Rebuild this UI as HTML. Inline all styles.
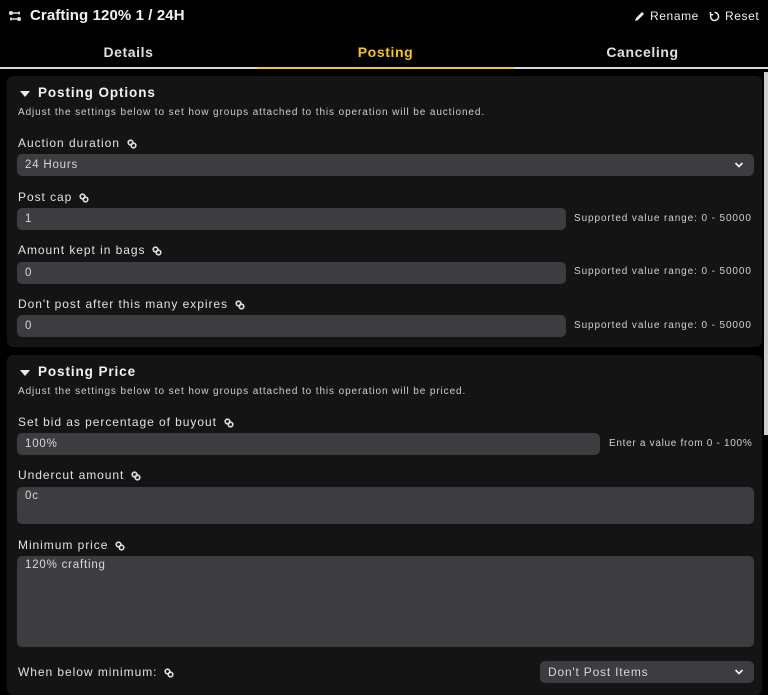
<!DOCTYPE html>
<html><head><meta charset="utf-8"><style>
*{box-sizing:border-box;margin:0;padding:0}
body{width:768px;height:693px;overflow:hidden;background:#000;color:#e6e6e6;font-family:"Liberation Sans","DejaVu Sans",sans-serif;position:relative}
.a{position:absolute;white-space:nowrap}
.title{left:30px;top:7px;font-size:15px;font-weight:bold;color:#f2f2f2;letter-spacing:.1px}
.tab{top:44px;font-size:14px;font-weight:bold;width:257px;text-align:center;letter-spacing:.6px;color:#e0e0e0}
.panel{position:absolute;left:7px;right:6px;background:#141415;border-radius:6px}
.h{font-size:13.5px;font-weight:bold;color:#f2f2f2;letter-spacing:.9px}
.d{font-size:10px;color:#cfcfcf;letter-spacing:.9px}
.l{font-size:12px;color:#e2e2e2;letter-spacing:.95px}
.in{position:absolute;background:#3c3c41;border-radius:5px;font-size:11.5px;color:#d8d8d8;padding-left:8px;letter-spacing:.8px}
.hint{font-size:10px;color:#d0d0d0;letter-spacing:.9px}
.link{display:inline-block;margin-left:7px;vertical-align:middle}
.tri{position:absolute;width:0;height:0;border-left:5px solid transparent;border-right:5px solid transparent;border-top:6px solid #eee}
</style></head><body>
<svg class="a" style="left:9px;top:10px" width="12" height="12" viewBox="0 0 12 12" fill="none" stroke="#ddd" stroke-width="1.5"><path d="M1 3h10M1 9h10"/><circle cx="2" cy="3" r="1.3" fill="#ddd"/><circle cx="10" cy="9" r="1.3" fill="#ddd"/><path d="M10 1.5v3M2 7.5v3"/></svg>
<div class="a title">Crafting 120% 1 / 24H</div>
<svg class="a" style="left:634px;top:11px" width="11" height="11" viewBox="0 0 11 11"><path d="M1 10l1-3 6-6 2 2-6 6z" fill="#eee"/></svg>
<div class="a" style="left:650px;top:9px;font-size:12px;letter-spacing:.6px;color:#eee">Rename</div>
<svg class="a" style="left:709px;top:11px" width="11" height="11" viewBox="0 0 11 11" fill="none" stroke="#eee" stroke-width="1.4"><path d="M2.3 3.2A4 4 0 1 0 5.5 1.5"/><path d="M1.5 1v2.7h2.7" /></svg>
<div class="a" style="left:725px;top:9px;font-size:12px;letter-spacing:.6px;color:#eee">Reset</div>
<div class="a tab" style="left:0;">Details</div>
<div class="a tab" style="left:257px;color:#f5c518">Posting</div>
<div class="a tab" style="left:514px;">Canceling</div>
<div class="a" style="left:0;top:67px;width:768px;height:2px;background:#d8d8d8"></div>
<div class="a" style="left:257px;top:67px;width:257px;height:2px;background:#f5c518"></div>
<div class="a" style="left:764px;top:72px;width:4px;height:363px;background:#cfcfcf"></div>

<div class="panel" style="top:76px;height:271px"></div>
<div class="panel" style="top:355px;height:340px"></div>

<div class="tri" style="left:20px;top:91px"></div>
<div class="a h" style="left:38px;top:85px">Posting Options</div>
<div class="a d" style="left:18px;top:107px">Adjust the settings below to set how groups attached to this operation will be auctioned.</div>

<div class="a l" style="left:18px;top:136px">Auction duration<svg class="link" width="10" height="10" viewBox="0 0 10 10" fill="none" stroke="#ddd" stroke-width="1.6"><circle cx="3.5" cy="3.5" r="2.3"/><circle cx="6.5" cy="6.5" r="2.3"/></svg></div>
<div class="in" style="left:17px;top:154px;width:737px;height:22px;line-height:22px">24 Hours</div>
<svg class="a" style="left:734px;top:161px" width="10" height="8" viewBox="0 0 10 8"><path d="M1.5 2l3.5 3.5L8.5 2" fill="none" stroke="#eee" stroke-width="1.8"/></svg>

<div class="a l" style="left:18px;top:190px">Post cap<svg class="link" width="10" height="10" viewBox="0 0 10 10" fill="none" stroke="#ddd" stroke-width="1.6"><circle cx="3.5" cy="3.5" r="2.3"/><circle cx="6.5" cy="6.5" r="2.3"/></svg></div>
<div class="in" style="left:17px;top:208px;width:549px;height:22px;line-height:22px">1</div>
<div class="a hint" style="left:574px;top:213px">Supported value range: 0 - 50000</div>

<div class="a l" style="left:18px;top:243px">Amount kept in bags<svg class="link" width="10" height="10" viewBox="0 0 10 10" fill="none" stroke="#ddd" stroke-width="1.6"><circle cx="3.5" cy="3.5" r="2.3"/><circle cx="6.5" cy="6.5" r="2.3"/></svg></div>
<div class="in" style="left:17px;top:262px;width:549px;height:22px;line-height:22px">0</div>
<div class="a hint" style="left:574px;top:266px">Supported value range: 0 - 50000</div>

<div class="a l" style="left:18px;top:297px">Don't post after this many expires<svg class="link" width="10" height="10" viewBox="0 0 10 10" fill="none" stroke="#ddd" stroke-width="1.6"><circle cx="3.5" cy="3.5" r="2.3"/><circle cx="6.5" cy="6.5" r="2.3"/></svg></div>
<div class="in" style="left:17px;top:315px;width:549px;height:22px;line-height:22px">0</div>
<div class="a hint" style="left:574px;top:320px">Supported value range: 0 - 50000</div>

<div class="tri" style="left:20px;top:370px"></div>
<div class="a h" style="left:38px;top:364px">Posting Price</div>
<div class="a d" style="left:18px;top:386px">Adjust the settings below to set how groups attached to this operation will be priced.</div>

<div class="a l" style="left:18px;top:415px">Set bid as percentage of buyout<svg class="link" width="10" height="10" viewBox="0 0 10 10" fill="none" stroke="#ddd" stroke-width="1.6"><circle cx="3.5" cy="3.5" r="2.3"/><circle cx="6.5" cy="6.5" r="2.3"/></svg></div>
<div class="in" style="left:17px;top:433px;width:583px;height:22px;line-height:22px">100%</div>
<div class="a hint" style="left:609px;top:438px;letter-spacing:.7px">Enter a value from 0 - 100%</div>

<div class="a l" style="left:18px;top:468px">Undercut amount<svg class="link" width="10" height="10" viewBox="0 0 10 10" fill="none" stroke="#ddd" stroke-width="1.6"><circle cx="3.5" cy="3.5" r="2.3"/><circle cx="6.5" cy="6.5" r="2.3"/></svg></div>
<div class="in" style="left:17px;top:487px;width:737px;height:37px;padding-top:3px">0c</div>

<div class="a l" style="left:18px;top:538px">Minimum price<svg class="link" width="10" height="10" viewBox="0 0 10 10" fill="none" stroke="#ddd" stroke-width="1.6"><circle cx="3.5" cy="3.5" r="2.3"/><circle cx="6.5" cy="6.5" r="2.3"/></svg></div>
<div class="in" style="left:17px;top:556px;width:737px;height:91px;padding-top:3px">120% crafting</div>

<div class="a l" style="left:18px;top:665px">When below minimum:<svg class="link" width="10" height="10" viewBox="0 0 10 10" fill="none" stroke="#ddd" stroke-width="1.6"><circle cx="3.5" cy="3.5" r="2.3"/><circle cx="6.5" cy="6.5" r="2.3"/></svg></div>
<div class="in" style="left:540px;top:661px;width:214px;height:22px;line-height:22px;font-size:12px">Don't Post Items</div>
<svg class="a" style="left:734px;top:668px" width="10" height="8" viewBox="0 0 10 8"><path d="M1.5 2l3.5 3.5L8.5 2" fill="none" stroke="#eee" stroke-width="1.8"/></svg>
</body></html>
